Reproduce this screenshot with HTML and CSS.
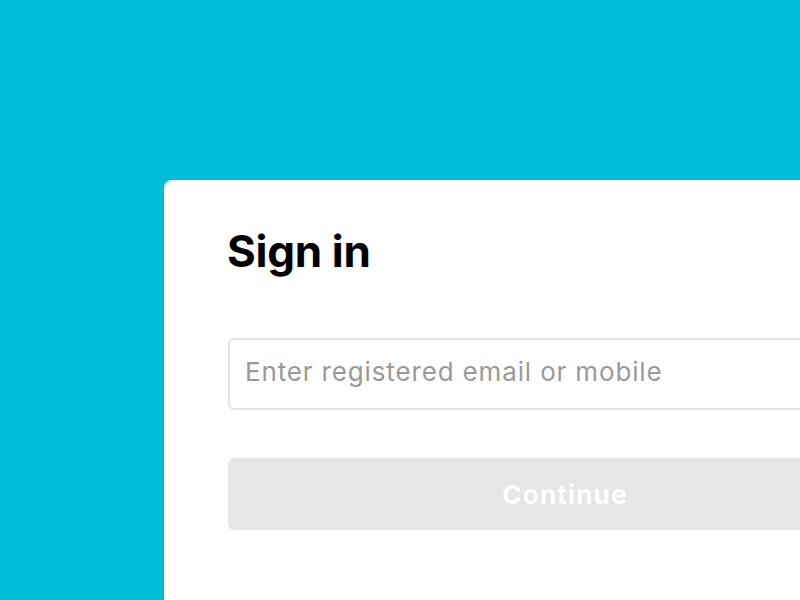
FILE: index.html
```html
<!DOCTYPE html>
<html lang="en">
<head>
<meta charset="utf-8">
<title>Sign in</title>
<link rel="stylesheet" href="styles.css">
</head>
<body>
<main class="page">
  <section class="card">
    <h1 class="title">Sign in</h1>
    <form class="form">
      <input class="field" type="text" placeholder="Enter registered email or mobile">
      <button class="btn" type="button" disabled>Continue</button>
    </form>
  </section>
</main>
</body>
</html>
```

FILE: styles.css
```css
html, body {
  margin: 0;
  padding: 0;
  height: 100%;
  overflow: hidden;
}
body {
  background: #00bcd4;
  font-family: Inter, "Noto Sans", sans-serif;
}
.page {
  padding: 180px 0 0 164px;
}
.card {
  width: 802px;
  box-sizing: border-box;
  min-height: 600px;
  background: #fff;
  border-radius: 8px;
  padding: 47px 64px 0 64px;
}
.title {
  margin: 0 0 0 -1px;
  font-size: 44px;
  line-height: 48px;
  font-weight: 700;
  letter-spacing: -0.3px;
  color: #000;
}
.form {
  margin-top: 63px;
  display: flex;
  flex-direction: column;
  gap: 48px;
  width: 674px;
}
.field {
  box-sizing: border-box;
  height: 72px;
  width: 100%;
  border: 2px solid #e4e4e4;
  border-radius: 6px;
  padding: 0 15px 5px 15px;
  font-family: Inter, "Noto Sans", sans-serif;
  font-size: 26px;
  letter-spacing: 0.85px;
  color: #222;
  outline: none;
  margin: 0;
}
.field::placeholder {
  color: #999;
}
.btn {
  height: 72px;
  width: 100%;
  border: none;
  border-radius: 6px;
  background: #e6e6e6;
  color: #fff;
  font-family: Inter, "Noto Sans", sans-serif;
  font-size: 26px;
  font-weight: 700;
  letter-spacing: 1.2px;
  margin: 0;
  padding: 0;
}
```
